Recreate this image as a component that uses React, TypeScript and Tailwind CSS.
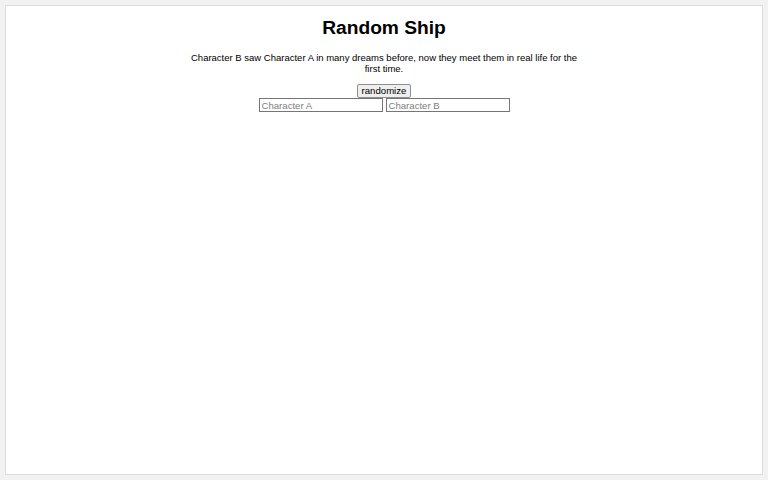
export default function App() {
  return (
    <div className="h-[480px] w-[768px] bg-[#f2f2f2] p-[5px] font-['Liberation_Sans',Arial,sans-serif] text-black">
      <div className="flex h-full flex-col items-center border border-[#dcdcdc] bg-white pt-[11px]">
        <h1 className="text-[19.2px] font-bold leading-[22px]">Random Ship</h1>
        <p className="mt-[13px] w-[388px] text-center text-[9.5px] leading-[11px]">
          Character B saw Character A in many dreams before, now they meet them in real life for the first time.
        </p>
        <button
          type="button"
          className="mt-[10px] h-[14px] rounded-[2px] border border-[#8f8f8f] bg-[#efefef] px-[4px] text-[9.6px] leading-[12px]"
        >
          randomize
        </button>
        <div className="flex gap-[3px]">
          <input
            placeholder="Character A"
            className="h-[14px] w-[124px] border border-[#767676] px-[2px] text-[9.6px] leading-[12px] placeholder:text-[#808080]"
          />
          <input
            placeholder="Character B"
            className="h-[14px] w-[124px] border border-[#767676] px-[2px] text-[9.6px] leading-[12px] placeholder:text-[#808080]"
          />
        </div>
      </div>
    </div>
  );
}
